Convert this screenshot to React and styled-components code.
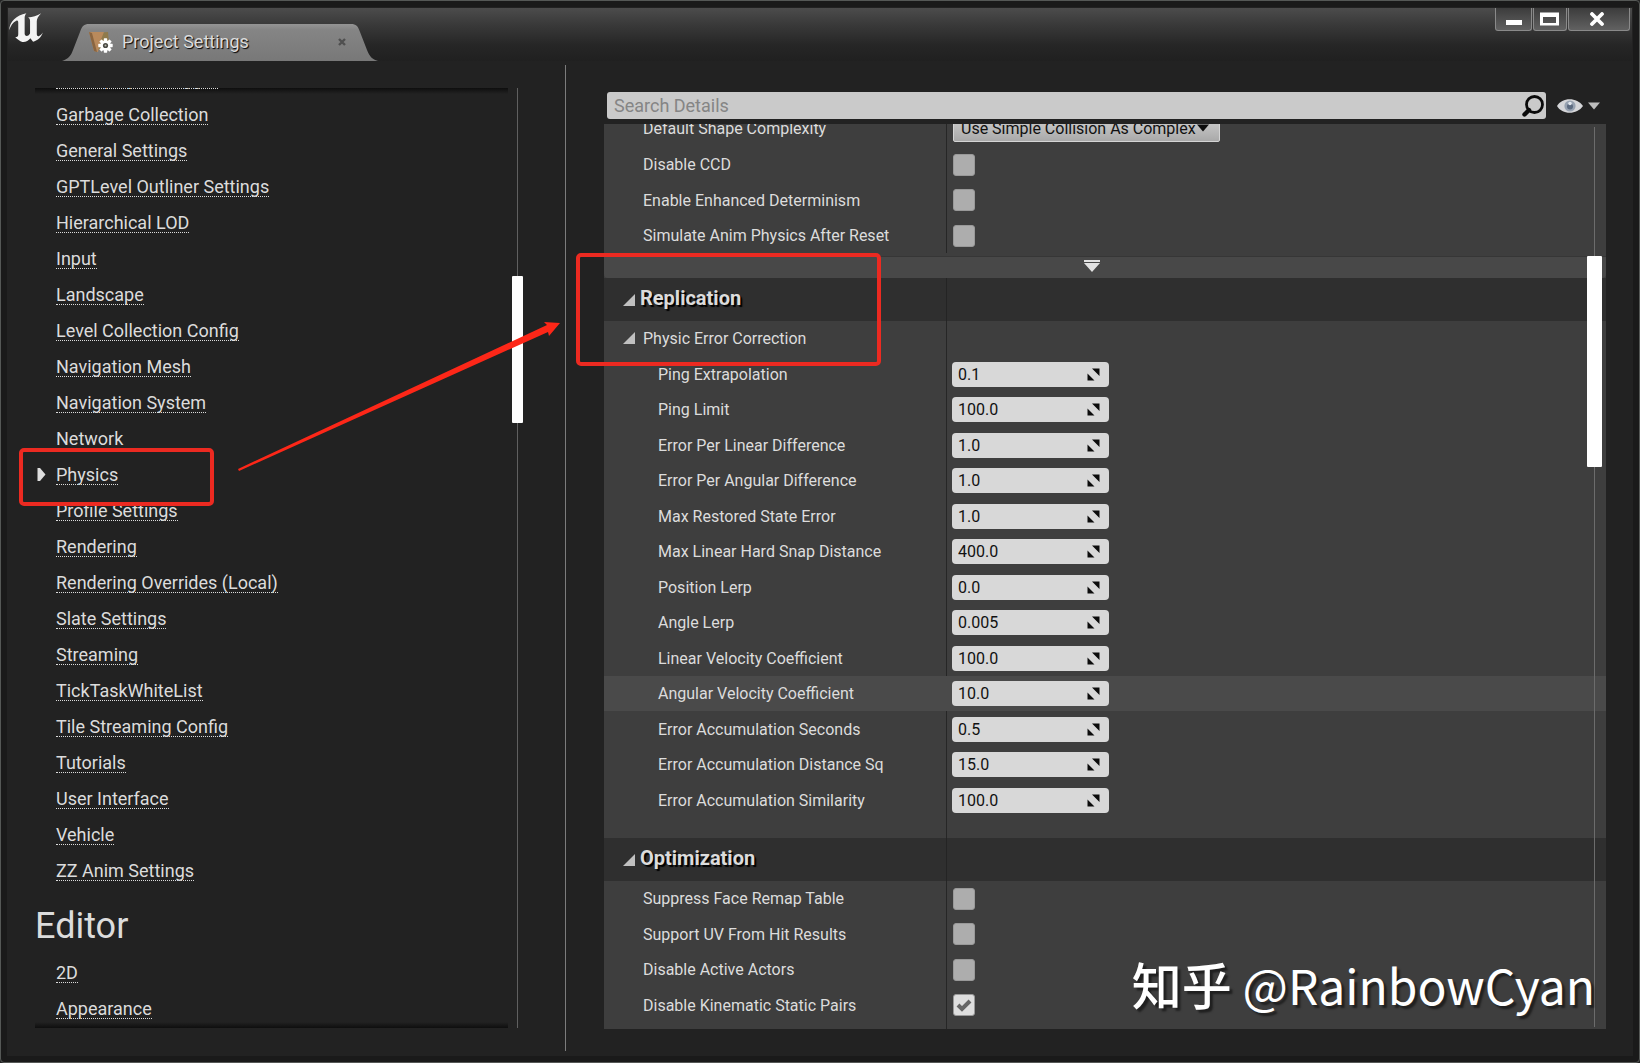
import React from 'react'
import styled, { createGlobalStyle } from 'styled-components'

const engineLinks = [
    'Gameplay Debugger',
    'Garbage Collection',
    'General Settings',
    'GPTLevel Outliner Settings',
    'Hierarchical LOD',
    'Input',
    'Landscape',
    'Level Collection Config',
    'Navigation Mesh',
    'Navigation System',
    'Network',
    'Physics',
    'Profile Settings',
    'Rendering',
    'Rendering Overrides (Local)',
    'Slate Settings',
    'Streaming',
    'TickTaskWhiteList',
    'Tile Streaming Config',
    'Tutorials',
    'User Interface',
    'Vehicle',
    'ZZ Anim Settings',
]

const editorLinks = ['2D', 'Appearance']

const simulationFlags = [
    { name: 'Disable CCD' },
    { name: 'Enable Enhanced Determinism' },
    { name: 'Simulate Anim Physics After Reset' },
]

const errorCorrection = [
    { name: 'Ping Extrapolation', value: '0.1' },
    { name: 'Ping Limit', value: '100.0' },
    { name: 'Error Per Linear Difference', value: '1.0' },
    { name: 'Error Per Angular Difference', value: '1.0' },
    { name: 'Max Restored State Error', value: '1.0' },
    { name: 'Max Linear Hard Snap Distance', value: '400.0' },
    { name: 'Position Lerp', value: '0.0' },
    { name: 'Angle Lerp', value: '0.005' },
    { name: 'Linear Velocity Coefficient', value: '100.0' },
    { name: 'Angular Velocity Coefficient', value: '10.0', active: true },
    { name: 'Error Accumulation Seconds', value: '0.5' },
    { name: 'Error Accumulation Distance Sq', value: '15.0' },
    { name: 'Error Accumulation Similarity', value: '100.0' },
]

const optimizationFlags = [
    { name: 'Suppress Face Remap Table' },
    { name: 'Support UV From Hit Results' },
    { name: 'Disable Active Actors' },
    { name: 'Disable Kinematic Static Pairs', checked: true },
]

const toId = (name) => name.toLowerCase().replace(/[^a-z0-9]+/g, '-')

const Logo = () => (
    <svg width="36" height="31" viewBox="26 34 106 92" aria-label="Unreal Engine">
        <path
            fill="#f4f4f4"
            d="M29 88 C31 62 50 44 80 38 C75 44 75 48 75 56 V98 C75 105 81 107 87 103 L91 98 V60 C91 55 89 52 85 50 C99 50 111 46 124 38 C115 48 111 54 111 62 V98 C111 105 114 107 118 105 C123 103 126 99 129 95 C124 110 112 120 100 122 L92 112 C86 120 78 124 68 123 C60 122 54 114 47 109 C54 109 56 106 56 100 V66 C56 60 54 58 50 60 C40 64 34 74 29 88Z"
        />
    </svg>
)

const TabShape = () => (
    <svg width="100%" height="100%" viewBox="0 0 316 37" preserveAspectRatio="none">
        <defs>
            <linearGradient id="tabFill" x1="0" y1="0" x2="0" y2="1">
                <stop offset="0" stopColor="#949494" />
                <stop offset="0.15" stopColor="#858585" />
                <stop offset="1" stopColor="#787878" />
            </linearGradient>
        </defs>
        <path
            fill="url(#tabFill)"
            d="M0 37 C6 35 9 32 11 26 L18 8 C20 2 22 0 27 0 H289 C294 0 296 2 298 8 L305 26 C308 33 310 35 316 37Z"
        />
    </svg>
)

const FolderGear = () => (
    <svg width="26" height="24" viewBox="0 0 26 24">
        <path fill="#8f7a4c" d="M8 3 L20 2 L21 14 L9 21Z" />
        <path fill="#b98a5c" d="M1 2 H16 L12 12 L10 22 L6 21Z" />
        <path fill="#8a6540" d="M1 2 L4 3 L9 22 L6 21Z" />
        <g fill="#fff" transform="translate(17.5 15.5)">
            <circle r="5.2" />
            {[0, 45, 90, 135].map((turn) => (
                <rect key={turn} x="-1.7" y="-7.2" width="3.4" height="14.4" rx="0.6" transform={`rotate(${turn})`} />
            ))}
            <circle r="2.6" fill="#4a4a44" />
            <circle r="1" fill="#b8b8b0" />
        </g>
    </svg>
)

const Magnifier = () => (
    <svg width="24" height="24" viewBox="0 0 24 24" fill="none" stroke="#0a0a0a">
        <circle cx="13.5" cy="10.5" r="8" strokeWidth="2.8" />
        <path d="M8 16 L3.5 20.5" strokeWidth="4.4" strokeLinecap="round" />
    </svg>
)

const Eye = () => (
    <svg width="28" height="18" viewBox="0 0 28 18">
        <path fill="#d5d6d9" d="M1 9 C6 0 21 0 27 9 C21 18 6 18 1 9Z" />
        <circle cx="14" cy="9" r="5.6" fill="#97a2b1" />
        <circle cx="14" cy="9.5" r="3" fill="#5c6b80" />
        <circle cx="14" cy="6.5" r="1.8" fill="#dfe5ec" />
    </svg>
)

const DownArrow = ({ width, fill }) => (
    <svg width={width} height="8" viewBox="0 0 12 8" preserveAspectRatio="none">
        <path fill={fill} d="M0 0.5 H12 L6 7.5Z" />
    </svg>
)

const AdvancedArrow = () => (
    <svg width="16" height="12" viewBox="0 0 16 12">
        <path fill="#e2e2e2" d="M0 0 H16 V2 H0Z M0 3 H16 L8 12Z" />
    </svg>
)

const CollapseArrow = () => (
    <svg width="12" height="12" viewBox="0 0 12 12">
        <path fill="#c0c0c0" d="M12 0 V12 H0Z" />
    </svg>
)

const CurrentArrow = () => (
    <svg width="9" height="13" viewBox="0 0 9 13">
        <path fill="#dedede" d="M0.5 0 H3 L8.5 6.5 L3 13 H0.5Z" />
    </svg>
)

const SpinHandle = () => (
    <svg width="13" height="13" viewBox="0 0 13 13">
        <path fill="#0c0c0c" d="M5 0.5 H12.5 V8Z M0.5 5.5 L7.5 12.5 H0.5Z" />
    </svg>
)

const Arrow = () => (
    <svg width="100%" height="100%" viewBox="0 0 322 150">
        <path fill="#fd2718" d="M0 147 L309 3 L306 0 L322 1 L311 14 L310 10 L1 149Z" />
    </svg>
)

const FlagRow = ({ name, checked }) => (
    <Row>
        <RowLabel htmlFor={toId(name)}>{name}</RowLabel>
        <RowValue>
            <CheckBox id={toId(name)} type="checkbox" defaultChecked={checked} />
        </RowValue>
    </Row>
)

const NumberRow = ({ name, value, active }) => (
    <Row $active={active}>
        <RowLabel htmlFor={toId(name)} $nested>{name}</RowLabel>
        <RowValue>
            <NumberBox>
                <NumberInput id={toId(name)} type="text" defaultValue={value} />
                <SpinHandle />
            </NumberBox>
        </RowValue>
    </Row>
)

const SectionHeader = ({ title }) => (
    <Header>
        <HeaderTitle>
            <CollapseArrow />
            <h2>{title}</h2>
        </HeaderTitle>
    </Header>
)

const App = () => {
    return (
        <>
            <GlobalStyle />
            <Window>
                <TitleBar>
                    <LogoSlot><Logo /></LogoSlot>
                    <Tab>
                        <TabBackground><TabShape /></TabBackground>
                        <FolderGear />
                        <TabTitle>Project Settings</TabTitle>
                        <TabClose aria-label="Close tab">
                            <svg width="8" height="8" viewBox="0 0 8 8">
                                <path d="M1 1 L7 7 M7 1 L1 7" stroke="#4f4f4f" strokeWidth="2.4" />
                            </svg>
                        </TabClose>
                    </Tab>
                    <WindowButtons>
                        <WindowButton aria-label="Minimize" $width={37}>
                            <svg width="16" height="14" viewBox="0 0 16 14"><path fill="#fff" d="M0 8 H16 V13 H0Z" /></svg>
                        </WindowButton>
                        <WindowButton aria-label="Maximize" $width={34}>
                            <svg width="20" height="14" viewBox="0 0 20 14">
                                <path fill="#fff" fillRule="evenodd" d="M0 0.5 H19 V13.5 H0Z M3 5 V11 H16 V5Z" />
                            </svg>
                        </WindowButton>
                        <WindowButton aria-label="Close" $width={62}>
                            <svg width="20" height="14" viewBox="0 0 20 14">
                                <path d="M3 2 L13 12 M13 2 L3 12" stroke="#fff" strokeWidth="3.8" strokeLinecap="round" />
                            </svg>
                        </WindowButton>
                    </WindowButtons>
                </TitleBar>

                <Body>
                    <Sidebar>
                        <SidebarList>
                            {engineLinks.map((link) => (
                                <SidebarItem key={link}>
                                    <Marker>{link === 'Physics' && <CurrentArrow />}</Marker>
                                    <SidebarLink href={`#${toId(link)}`}>{link}</SidebarLink>
                                </SidebarItem>
                            ))}
                            <SidebarHeading>Editor</SidebarHeading>
                            {editorLinks.map((link) => (
                                <SidebarItem key={link}>
                                    <Marker />
                                    <SidebarLink href={`#${toId(link)}`}>{link}</SidebarLink>
                                </SidebarItem>
                            ))}
                        </SidebarList>
                        <SidebarTrack><SidebarThumb /></SidebarTrack>
                    </Sidebar>
                    <Splitter />
                    <Details>
                        <SearchBar>
                            <SearchBox>
                                <SearchInput type="text" placeholder="Search Details" aria-label="Search Details" />
                                <Magnifier />
                            </SearchBox>
                            <ViewButton aria-label="View options">
                                <Eye />
                                <DownArrow width="12" fill="#bdbdbd" />
                            </ViewButton>
                        </SearchBar>
                        <Panel>
                            <Group $scrolled>
                                <Row $tall>
                                    <RowLabel htmlFor="shape">Default Shape Complexity</RowLabel>
                                    <RowValue>
                                        <SelectBox>
                                            <Select id="shape">
                                                <option>Use Simple Collision As Complex</option>
                                            </Select>
                                            <SelectArrow><DownArrow width="12" fill="#0c0c0c" /></SelectArrow>
                                        </SelectBox>
                                    </RowValue>
                                </Row>
                                {simulationFlags.map((flag) => <FlagRow key={flag.name} {...flag} />)}
                            </Group>
                            <Advanced aria-label="Show advanced"><AdvancedArrow /></Advanced>

                            <SectionHeader title="Replication" />
                            <Group $offset $padded>
                                <Row>
                                    <RowLabel as="h3"><CollapseArrow />Physic Error Correction</RowLabel>
                                    <RowValue />
                                </Row>
                                {errorCorrection.map((item) => <NumberRow key={item.name} {...item} />)}
                            </Group>

                            <SectionHeader title="Optimization" />
                            <Group $offset $padded>
                                {optimizationFlags.map((flag) => <FlagRow key={flag.name} {...flag} />)}
                            </Group>
                            <PanelTrack><PanelThumb /></PanelTrack>
                        </Panel>
                    </Details>
                </Body>

                <Highlight $left={19} $top={448} $width={195} $height={58} />
                <Highlight $left={576} $top={253} $width={305} $height={113} />
                <ArrowLayer><Arrow /></ArrowLayer>
                <Watermark><b>知乎</b> @RainbowCyan</Watermark>
            </Window>
        </>
    )
}

export default App

const GlobalStyle = createGlobalStyle`
    * {
        box-sizing: border-box;
    }

    body {
        margin: 0;
        background: #222;
        font-family: Roboto, "Noto Sans CJK SC", sans-serif;
        color: #dcdcdc;
    }

    h2, h3 {
        margin: 0;
    }

    button, input, select {
        font-family: inherit;
        padding: 0;
        margin: 0;
        border: none;
        outline: none;
    }

    svg {
        display: block;
        flex: none;
    }
`

const Window = styled.div`
    position: relative;
    display: flex;
    flex-direction: column;
    height: 100vh;
    padding: 7px;
    overflow: hidden;
    background: #222;
    border: 1px solid #555856;
    border-radius: 4px;
    box-shadow: inset 0 0 0 6px #1a1a1a;
`

const TitleBar = styled.header`
    display: flex;
    flex: none;
    height: 53px;
    background: linear-gradient(180deg, #4c4c4c, #3a3a3a 30%, #262626 70%, #202020);
`

const LogoSlot = styled.div`
    width: 54px;
    padding-top: 4px;
`

const Tab = styled.div`
    position: relative;
    display: flex;
    align-items: center;
    width: 316px;
    height: 37px;
    margin-top: 16px;
    padding: 0 32px 2px 26px;
`

const TabBackground = styled.div`
    position: absolute;
    inset: 0;
    z-index: 0;

    & ~ * {
        position: relative;
    }
`

const TabTitle = styled.span`
    flex: 1;
    margin-left: 8px;
    font-size: 18px;
    text-shadow: 1px 1px 1px #000;
`

const TabClose = styled.button`
    background: none;
`

const WindowButtons = styled.div`
    display: flex;
    gap: 1px;
    margin-left: auto;
    margin-right: 2px;
`

const WindowButton = styled.button`
    display: flex;
    align-items: center;
    justify-content: center;
    width: ${ props => props.$width }px;
    height: 23px;
    background: linear-gradient(180deg, #3c3c3c, #616161);
    border: 1px solid #8a8a8a;
    border-top: none;
    border-radius: 0 0 3px 3px;
`

const Body = styled.main`
    display: flex;
    flex: 1;
    min-height: 0;
`

const Sidebar = styled.nav`
    display: flex;
    flex: none;
    width: 557px;
    padding: 27px 42px 27px 27px;
`

const SidebarList = styled.div`
    flex: 1;
    overflow: hidden;
    background:
        linear-gradient(180deg, #0e0e0e, transparent) top / 100% 6px no-repeat,
        linear-gradient(0deg, #0e0e0e, transparent) bottom / 100% 6px no-repeat;
`

const SidebarItem = styled.div`
    display: flex;
    align-items: center;
    height: 36px;

    &:first-child {
        margin-top: -27px;
    }
`

const Marker = styled.span`
    width: 21px;
    padding: 0 0 2px 2px;
`

const SidebarLink = styled.a`
    line-height: 19px;
    font-size: 18px;
    color: #dcdcdc;
    text-decoration: none;
    border-bottom: 1px dotted #dcdcdc;
`

const SidebarHeading = styled.h2`
    height: 66px;
    padding-top: 8px;
    font-size: 36px;
    font-weight: 400;
    line-height: 58px;
`

const SidebarTrack = styled.div`
    display: flex;
    justify-content: center;
    width: 11px;
    margin-left: 4px;
    background: linear-gradient(#606060, #606060) center / 1px 100% no-repeat;
`

const SidebarThumb = styled.div`
    width: 11px;
    height: 147px;
    margin-top: 188px;
    background: #fff;
    border-radius: 1px;
`

const Splitter = styled.div`
    width: 1px;
    margin: 4px 0;
    background: #7c7c7c;
`

const Details = styled.section`
    display: flex;
    flex: 1;
    flex-direction: column;
    min-width: 0;
    padding: 31px 26px 26px 38px;
`

const SearchBar = styled.div`
    display: flex;
    align-items: center;
    gap: 10px;
    margin-bottom: 5px;
    padding: 0 6px 0 3px;
`

const SearchBox = styled.div`
    display: flex;
    flex: 1;
    align-items: center;
    height: 27px;
    padding: 0 1px 0 7px;
    background: #cacaca;
    border-radius: 3px;
`

const SearchInput = styled.input`
    flex: 1;
    font-size: 18px;
    background: none;

    &::placeholder {
        color: #858585;
    }
`

const ViewButton = styled.button`
    display: flex;
    gap: 4px;
    align-items: center;
    background: none;
`

const Panel = styled.div`
    position: relative;
    flex: 1;
    overflow: hidden;
    background: #3e3e3e;
`

const Row = styled.div`
    display: flex;
    height: ${ props => props.$tall ? '38px' : '36px' };
    background: ${ props => props.$active ? '#4a4a4a' : 'transparent' };
`

const Group = styled.div`
    margin-top: ${ props => props.$scrolled ? '-15px' : '0' };
    padding-bottom: ${ props => props.$padded ? '20px' : '0' };
    background: linear-gradient(#262626, #262626) 342px 0 / 1px 100% no-repeat;

    ${Row}:nth-child(${ props => props.$offset ? 'odd' : 'even' }) {
        height: 35px;
    }
`

const RowLabel = styled.label`
    display: flex;
    align-items: center;
    gap: 8px;
    width: 342px;
    padding-left: ${ props => props.$nested ? '54px' : '39px' };
    font-size: 16px;
    font-weight: 400;

    svg {
        margin-left: -20px;
        margin-bottom: 2px;
    }
`

const RowValue = styled.div`
    display: flex;
    flex: 1;
    align-items: center;
    padding-left: 6px;
`

const CheckBox = styled.input`
    appearance: none;
    width: 22px;
    height: 22px;
    margin-left: 1px;
    background: #adadad;
    border: 1px solid #999;
    border-radius: 3px;

    &:checked {
        background: #dedede url("data:image/svg+xml,%3Csvg xmlns='http://www.w3.org/2000/svg' viewBox='0 0 20 20'%3E%3Cpath d='M4 10 L8 14 L16 6' fill='none' stroke='%23666' stroke-width='4'/%3E%3C/svg%3E");
    }
`

const NumberBox = styled.div`
    display: flex;
    align-items: center;
    width: 157px;
    height: 25px;
    padding: 0 9px 0 6px;
    background: #d8d8d8;
    border-radius: 4px;
`

const NumberInput = styled.input`
    flex: 1;
    min-width: 0;
    font-size: 16px;
    color: #111;
    background: none;
`

const SelectBox = styled.div`
    position: relative;
    margin-left: 1px;
`

const Select = styled.select`
    appearance: none;
    width: 267px;
    height: 28px;
    padding-left: 7px;
    font-size: 16px;
    color: #111;
    background: linear-gradient(180deg, #d2d2d2, #a9a9a9);
    border: 1px solid #d4d4d4;
    border-radius: 2px;
`

const SelectArrow = styled.span`
    position: absolute;
    top: 10px;
    right: 11px;
    pointer-events: none;
`

const Advanced = styled.button`
    display: flex;
    align-items: center;
    justify-content: center;
    width: 100%;
    height: 21px;
    margin-top: 4px;
    padding: 0 26px 3px 0;
    background: #484848;
    border-radius: 0 0 4px 4px;
    box-shadow: 0 -1px 0 #363636;
`

const Header = styled.div`
    height: 43px;
    background: linear-gradient(#242424, #242424) 342px 0 / 1px 100% no-repeat #2f2f2f;
`

const HeaderTitle = styled.div`
    display: flex;
    align-items: center;
    gap: 5px;
    height: 39px;
    padding-left: 19px;

    h2 {
        font-size: 20px;
        font-weight: 700;
        text-shadow: 2px 2px 1px #000;
    }

    svg {
        margin-top: 4px;
    }
`

const PanelTrack = styled.div`
    position: absolute;
    top: 3px;
    right: 4px;
    bottom: 2px;
    width: 15px;
    background: linear-gradient(#6c6c6c, #6c6c6c) center / 1px 100% no-repeat;
`

const PanelThumb = styled.div`
    height: 211px;
    margin-top: 129px;
    background: #fff;
    border-radius: 1px;
`

const Highlight = styled.div`
    position: absolute;
    left: ${ props => props.$left - 1 }px;
    top: ${ props => props.$top - 1 }px;
    width: ${ props => props.$width }px;
    height: ${ props => props.$height }px;
    border: 4px solid #ec2a21;
    border-radius: 5px;
    pointer-events: none;
`

const ArrowLayer = styled.div`
    position: absolute;
    left: 237px;
    top: 321px;
    width: 322px;
    height: 150px;
    pointer-events: none;
`

const Watermark = styled.div`
    position: absolute;
    right: 44px;
    bottom: 42px;
    font-family: "Noto Sans CJK SC", sans-serif;
    font-size: 48px;
    line-height: 72px;
    color: #fff;
    text-shadow: 3px 3px 2px rgba(0, 0, 0, 0.5);

    b {
        font-size: 50px;
        font-weight: 500;
    }
`
